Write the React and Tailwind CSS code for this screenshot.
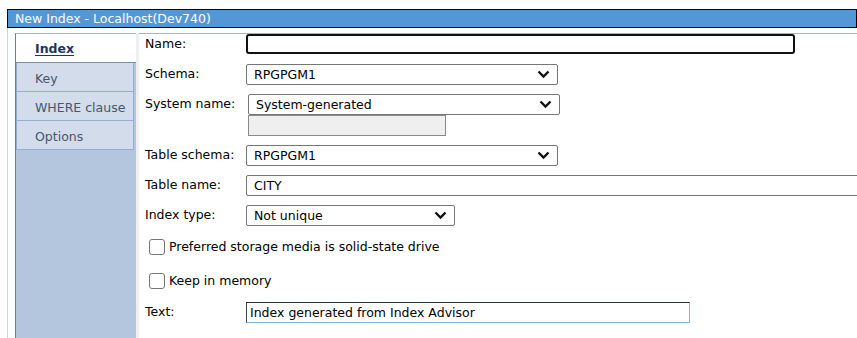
import React from "react";

const font = "font-['DejaVu_Sans','Verdana',sans-serif] text-[12.5px]";

function Chevron() {
  return (
    <svg width="13" height="9" viewBox="0 0 13 9" className="shrink-0">
      <polyline points="1.5,1.5 6.5,6.5 11.5,1.5" fill="none" stroke="#111" strokeWidth="2.4" />
    </svg>
  );
}

function Select({ value, width }) {
  return (
    <div className={`flex items-center justify-between h-[21px] border border-[#767676] rounded-[2px] bg-white pl-[7px] pr-[7px] ${width}`}>
      <span className="text-black leading-none pt-[1px]">{value}</span>
      <Chevron />
    </div>
  );
}

function Row({ label, children, className = "" }) {
  return (
    <div className={`flex items-start ${className}`}>
      <div className="w-[101px] shrink-0 pt-[2px] leading-[16px] text-black">{label}</div>
      {children}
    </div>
  );
}

function Check({ label, className = "" }) {
  return (
    <div className={`flex items-center pl-[4px] ${className}`}>
      <div className="w-[16px] h-[16px] border border-[#767676] rounded-[3px] bg-white" />
      <span className="ml-[4px] text-black leading-[16px]">{label}</span>
    </div>
  );
}

const tabs = ["Key", "WHERE clause", "Options"];

export default function App() {
  return (
    <div className={`w-[857px] h-[338px] overflow-hidden bg-white ${font}`}>
      <div className="pt-[9px] pl-[7px] h-full flex flex-col">
        <div className="h-[19px] border border-black bg-[#5597d5] text-white pl-[7px] leading-[17px] whitespace-nowrap">
          New Index - Localhost(Dev740)
        </div>
        <div className="flex-1 flex border-l border-[#d0d0d0] pl-[7px] pt-[5px]">
          {/* tab strip */}
          <div className="w-[121px] shrink-0 border-l border-t border-[#6d809b] border-t-[#a9b3bf] bg-[#b4c6de] flex flex-col">
            <div className="h-[29px] bg-white border-b border-[#7b8faa] pl-[19px] pt-[7px] leading-[16px]">
              <span className="font-bold underline underline-offset-2 text-[#1f3560]">Index</span>
            </div>
            {tabs.map((t) => (
              <div
                key={t}
                className="h-[29px] w-[118px] bg-[#d3dcea] border border-t-0 border-[#93afd6] pl-[18px] pt-[8px] leading-[16px] text-[#45566f]"
              >
                {t}
              </div>
            ))}
          </div>
          <div className="w-[3px] shrink-0 bg-[#efefef]" />
          {/* form */}
          <div className="flex-1 border-t border-[#a9b3bf] pl-[6px] flex flex-col">
            <Row label="Name:">
              <div className="w-[549px] h-[20px] border-2 border-[#111] rounded-[3px] bg-white" />
            </Row>
            <Row label="Schema:" className="mt-[10px]">
              <Select value="RPGPGM1" width="w-[312px]" />
            </Row>
            <Row label="System name:" className="mt-[9px]">
              <div className="flex flex-col ml-[2px]">
                <Select value="System-generated" width="w-[312px]" />
                <div className="w-[198px] h-[21px] border border-[#8a8a8a] bg-[#efefef]" />
              </div>
            </Row>
            <Row label="Table schema:" className="mt-[9px]">
              <Select value="RPGPGM1" width="w-[312px]" />
            </Row>
            <Row label="Table name:" className="mt-[9px]">
              <div className="w-[640px] h-[21px] border border-[#767676] rounded-[2px] bg-white pl-[7px] flex items-center">
                <span className="leading-none text-black pt-[1px]">CITY</span>
              </div>
            </Row>
            <Row label="Index type:" className="mt-[9px]">
              <Select value="Not unique" width="w-[209px]" />
            </Row>
            <Check label="Preferred storage media is solid-state drive" className="mt-[13px]" />
            <Check label="Keep in memory" className="mt-[18px]" />
            <Row label="Text:" className="mt-[13px]">
              <div className="w-[444px] h-[21px] border border-t-[#26303c] border-l-[#3a4654] border-r-[#8db3d4] border-b-[#8db3d4] bg-white pl-[3px] flex items-center">
                <span className="leading-none text-black pt-[1px]">Index generated from Index Advisor</span>
              </div>
            </Row>
          </div>
        </div>
      </div>
    </div>
  );
}
